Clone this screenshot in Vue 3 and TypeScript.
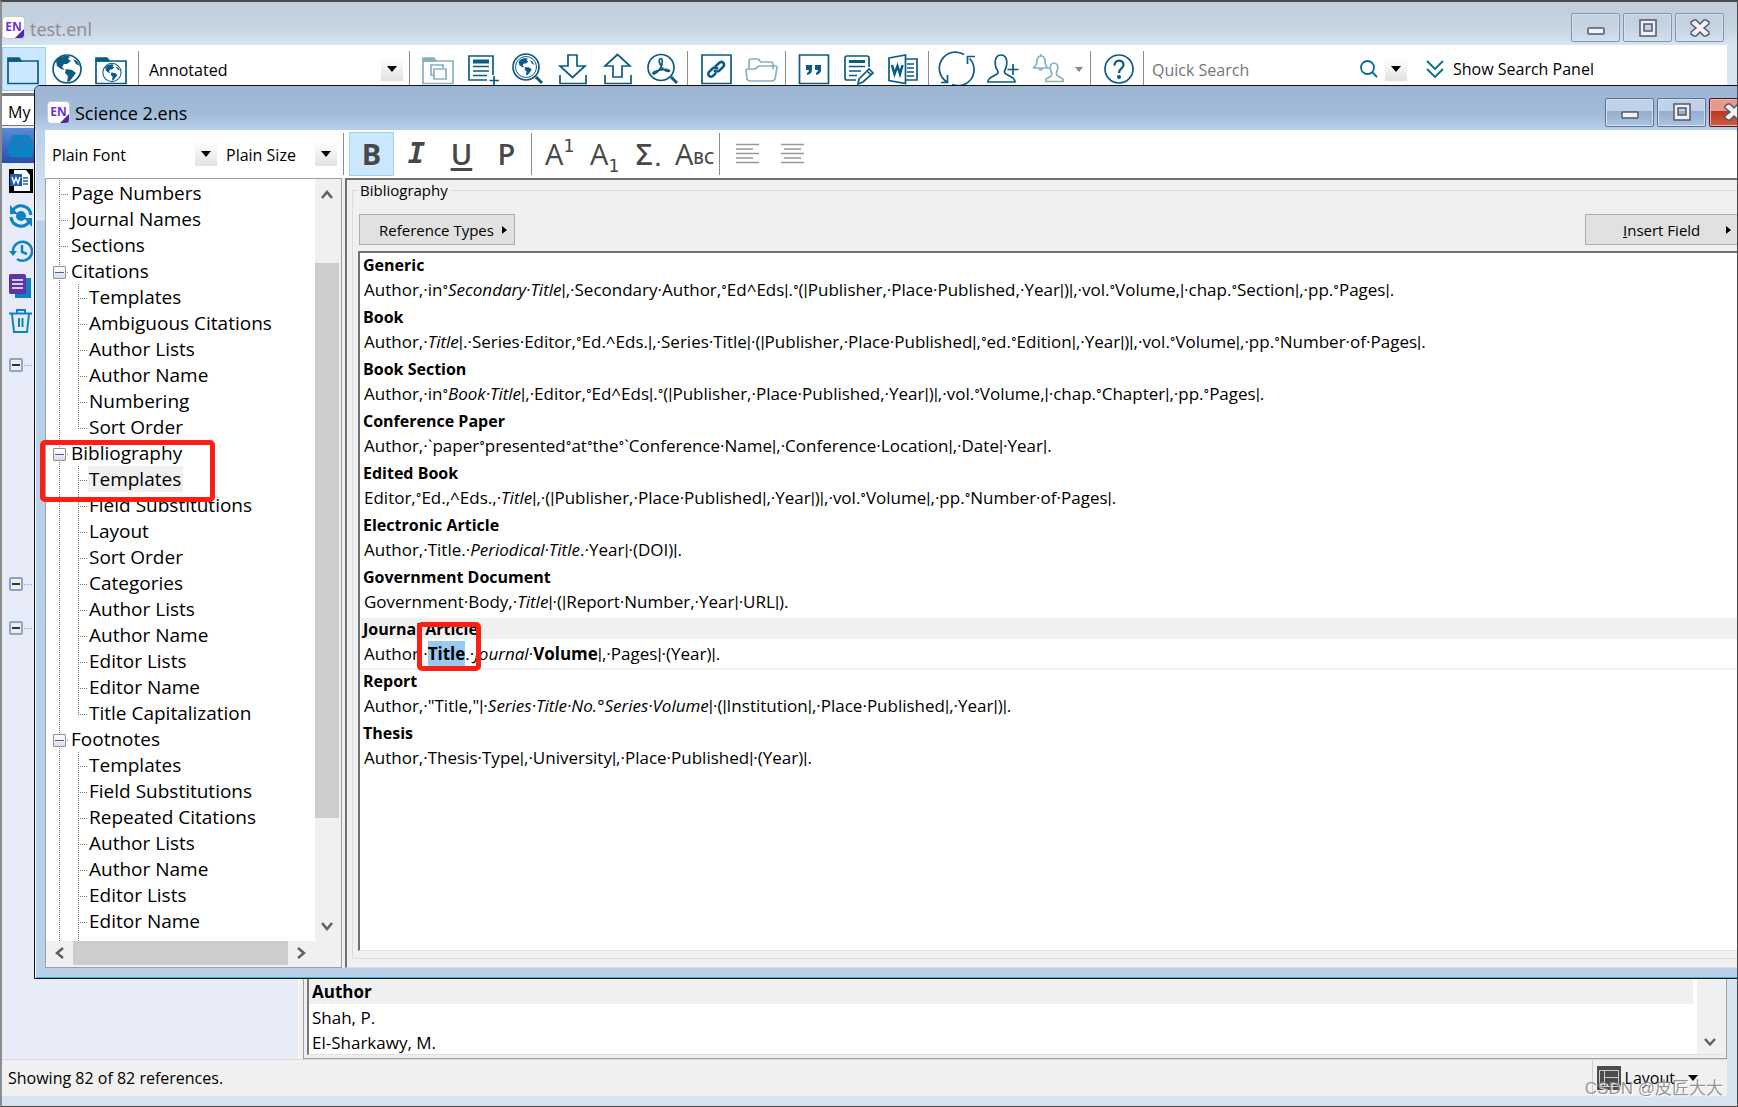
<script setup lang="ts">
import { ref } from 'vue'

interface ToolItem {
  icon?: string
  label?: string
  faded?: boolean
  active?: boolean
  caret?: boolean
  sep?: boolean
}

interface TreeRow {
  text: string
  level: 0 | 1
  group?: boolean
  last?: boolean
  selected?: boolean
}

type Part = { t: string; k: 'text' | 'italic' | 'bold' | 'bar' | 'deg' | 'selected' }

const land =
  '<path fill="currentColor" stroke="none" d="M7 10 11 6 17 4.500 21 5.500 19 8 22 10 18 13 15 13 13 16 16 19 12 18 8 15ZM24 8 28 10 31 15 27 13ZM17 18 23 19 27 22 24 26 21 30 18 31 19 25 16 22Z"/>'

const icons: Record<string, string> = {
  folder: '<path d="M3 10V32.500H33V10Z"/><path fill="currentColor" d="M3 10V7H14L16 10Z"/>',
  globe: '<circle cx="18" cy="18" r="14"/>' + land,
  folderGlobe:
    '<path d="M3 10V32.500H33V10Z"/><path fill="currentColor" d="M3 10V7H14L16 10Z"/><g transform="translate(8 10.500) scale(.61)"><circle cx="18" cy="18" r="15"/>' +
    land +
    '</g>',
  folderCopy:
    '<path d="M3 10V32.500H33V10Z"/><path fill="currentColor" d="M3 10V7H14L16 10Z"/><path d="M14 24H11V14H23V17M14 18H26V28H14Z"/>',
  newRef:
    '<path d="M28 24V5H4V29H22M8 15.500H24M8 20H24M8 24.500H22M29 25V34M24.500 29.500H34"/><path stroke-width="4" d="M8 10.500H24"/>',
  globeSearch:
    '<circle cx="16" cy="16" r="13"/><circle cx="16" cy="16" r="10.500" stroke-width="1"/><g transform="translate(4 4) scale(.66)">' +
    land +
    '</g><path stroke-width="3" d="M26 26 32 32"/>',
  download: '<path d="M13 4H22V15H30L17.500 26.500 5 15H13ZM5 24V32.500H31V24"/>',
  upload: '<path d="M13 26H22V15H30L17.500 3.500 5 15H13ZM5 24V32.500H31V24"/>',
  pdfSearch:
    '<circle cx="16" cy="16.500" r="13"/><path d="M15 8C18 6 18 13 15.500 17 13 21 8 25 8 22 9 20 17 18 22 18.500 28 20 22 22 18 18 15 14 13 9 15 8Z"/><path stroke-width="3" d="M26 26 32 32"/>',
  link: '<path d="M4 4H33V32.500H4Z"/><g stroke-width="2.500"><path d="M17 16 21 12C24 9 28 13 25 16L21 20C19 21 18 21 16 19M20 18C18 16 17 16 15 17L11 21C9 24 12 27 15 25L18 22"/></g>',
  openFolder:
    '<path d="M6 18V10Q6 8 8 8H14Q16 8 17 10L18 11H28Q30 11 30 13V18M5 18H12L16 15H33Q34 15 34 17L32 28Q31 30 29 30H7Q5 30 4 28L3 20Q3 18 5 18Z"/>',
  quote:
    '<path d="M3.500 4H32.500V32.500H3.500Z"/><path fill="currentColor" stroke="none" d="M10 14H16V19Q16 23 11 24V22Q13 21 13 19H10ZM19 14H25V19Q25 23 20 24V22Q22 21 22 19H19Z"/>',
  edit: '<path d="M28 16V7Q28 5 26 5H6Q4 5 4 7V27Q4 29 6 29H15M8 15.500H24M8 20H20M8 24.500H16M18 28 28 18 32 22 22 31 17 33ZM26 20 30 24"/><path stroke-width="3" d="M8 10.500H24"/>',
  word: '<path d="M3 7 19.500 4V32.500L3 29.500ZM20 8H31V29H20M21 13H28M21 17H28M21 21H28M21 25H28"/><path stroke-width="2.500" d="M6 14 8.500 23 11.500 15 14 23 16.500 14"/>',
  sync: '<path d="M8 31A16 16 0 0 1 25 3.500M30.500 7.500A16 16 0 0 1 13 33.500M28.500 13V5.500H36M8.500 24V31.500H2"/>',
  userPlus:
    '<path d="M12 17C10 9 12 4 17 4S24 9 22 17C20 20 20 22 22 23L29 27Q31 29 31 31H4Q4 29 6 27L13 23C15 22 14 20 12 17ZM29 13V24M23.500 18.500H34.500"/>',
  bellUser:
    '<path d="M2 17Q6 15 6 9 7 5 10 5T14 9Q14 15 17 17ZM8 18Q9.500 20 11.500 18M10 3V5M20 20C18 15 20 12 23 12S28 15 26 20C25 22 25 24 27 25L32 28V30.500H15V28L20 25C21 24 21 22 20 20Z"/>',
  help: '<circle cx="18" cy="18" r="14"/><path stroke-width="2.200" d="M13.500 14.500C13.500 8 22.500 8 22.500 14 22.500 18 18 17 18 22"/><circle cx="18" cy="26" r="1.200" fill="currentColor"/>',
}

const leftTools: ToolItem[] = [
  { icon: 'folder', label: 'Local library', active: true },
  { icon: 'globe', label: 'Online search' },
  { icon: 'folderGlobe', label: 'Integrated mode' },
]

const tools: ToolItem[] = [
  { icon: 'folderCopy', label: 'Copy to local library', faded: true },
  { icon: 'newRef', label: 'New reference' },
  { icon: 'globeSearch', label: 'Online search' },
  { icon: 'download', label: 'Import' },
  { icon: 'upload', label: 'Export' },
  { icon: 'pdfSearch', label: 'Find full text' },
  { sep: true },
  { icon: 'link', label: 'Open link' },
  { icon: 'openFolder', label: 'Open file', faded: true },
  { sep: true },
  { icon: 'quote', label: 'Insert citation' },
  { icon: 'edit', label: 'Format bibliography' },
  { icon: 'word', label: 'Return to word processor' },
  { sep: true },
  { icon: 'sync', label: 'Sync library' },
  { icon: 'userPlus', label: 'Share library' },
  { icon: 'bellUser', label: 'Activity feed', faded: true, caret: true },
  { sep: true },
  { icon: 'help', label: 'Help' },
  { sep: true },
]

const group = (text: string): TreeRow => ({ text, level: 0, group: true })
const children = (names: string[], closed = true, selected = ''): TreeRow[] =>
  names.map((text, i) => ({
    text,
    level: 1,
    last: closed && i === names.length - 1,
    selected: text === selected,
  }))

const tree: TreeRow[] = [
  { text: 'Page Numbers', level: 0 },
  { text: 'Journal Names', level: 0 },
  { text: 'Sections', level: 0 },
  group('Citations'),
  ...children(['Templates', 'Ambiguous Citations', 'Author Lists', 'Author Name', 'Numbering', 'Sort Order']),
  group('Bibliography'),
  ...children(
    [
      'Templates',
      'Field Substitutions',
      'Layout',
      'Sort Order',
      'Categories',
      'Author Lists',
      'Author Name',
      'Editor Lists',
      'Editor Name',
      'Title Capitalization',
    ],
    true,
    'Templates',
  ),
  group('Footnotes'),
  ...children(
    ['Templates', 'Field Substitutions', 'Repeated Citations', 'Author Lists', 'Author Name', 'Editor Lists', 'Editor Name'],
    false,
  ),
]

/* Template markup: _italic_, *bold*, ~selected~, | as field separator, ° as link-adjacent mark. */
const kinds: Record<string, Part['k']> = { _: 'italic', '*': 'bold', '~': 'selected' }
function parse(src: string): Part[] {
  const out: Part[] = []
  for (const piece of src.split(/(_[^_]+_|\*[^*]+\*|~[^~]+~|\||°)/)) {
    if (!piece) continue
    if (piece === '|') out.push({ t: '|', k: 'bar' })
    else if (piece === '°') out.push({ t: '°', k: 'deg' })
    else if (piece.length > 1 && kinds[piece[0]]) out.push({ t: piece.slice(1, -1), k: kinds[piece[0]] })
    else out.push({ t: piece, k: 'text' })
  }
  return out
}

const templates = [
  ['Generic', 'Author,·in°_Secondary·Title_|,·Secondary·Author,°Ed^Eds|.°(|Publisher,·Place·Published,·Year|)|,·vol.°Volume,|·chap.°Section|,·pp.°Pages|.'],
  ['Book', 'Author,·_Title_|.·Series·Editor,°Ed.^Eds.|,·Series·Title|·(|Publisher,·Place·Published|,°ed.°Edition|,·Year|)|,·vol.°Volume|,·pp.°Number·of·Pages|.'],
  ['Book Section', 'Author,·in°_Book·Title_|,·Editor,°Ed^Eds|.°(|Publisher,·Place·Published,·Year|)|,·vol.°Volume,|·chap.°Chapter|,·pp.°Pages|.'],
  ['Conference Paper', 'Author,·`paper°presented°at°the°`Conference·Name|,·Conference·Location|,·Date|·Year|.'],
  ['Edited Book', 'Editor,°Ed.,^Eds.,·_Title_|,·(|Publisher,·Place·Published|,·Year|)|,·vol.°Volume|,·pp.°Number·of·Pages|.'],
  ['Electronic Article', 'Author,·Title.·_Periodical·Title_.·Year|·(DOI)|.'],
  ['Government Document', 'Government·Body,·_Title_|·(|Report·Number,·Year|·URL|).'],
  ['Journal Article', 'Author,·~Title~.·_Journal_·*Volume*|,·Pages|·(Year)|.'],
  ['Report', 'Author,·"Title,"|·_Series·Title·No.°Series·Volume_|·(|Institution|,·Place·Published|,·Year|)|.'],
  ['Thesis', 'Author,·Thesis·Type|,·University|,·Place·Published|·(Year)|.'],
].map(([name, body]) => ({ name, parts: parse(body), current: name === 'Journal Article' }))

const search = ref('')
const authors = ['Shah, P.', 'El-Sharkawy, M.']
</script>

<template>
  <div class="app">
    <header class="titlebar">
      <span class="logo">EN</span>
      <span class="caption">test.enl</span>
      <div class="winbtns">
        <button aria-label="Minimize"><svg width="18" height="18"><rect x="1" y="9" width="16" height="6" rx="1" /></svg></button>
        <button aria-label="Maximize"><svg width="18" height="18"><path fill-rule="evenodd" d="M1 1H17V17H1ZM5 5V12H13V5Z" /></svg></button>
        <button aria-label="Close"><svg width="20" height="18"><path d="M1 3 4 1H6L10 5 14 1H16L19 3V5L14 9 19 13V15L16 17H14L10 13 6 17H4L1 15V13L6 9 1 5Z" /></svg></button>
      </div>
    </header>

    <div class="frame">
      <div class="toolbar">
        <button v-for="t in leftTools" :key="t.icon" class="tool mode" :class="{ active: t.active }" :aria-label="t.label">
          <svg class="ic" viewBox="1 0 36 36" v-html="icons[t.icon!]"></svg>
        </button>
        <span class="sep lead"></span>
        <label class="combo wide">
          <select aria-label="Output style"><option>Annotated</option></select>
          <span class="drop"><svg width="10" height="6"><path d="M0 0H10L5 6Z" /></svg></span>
        </label>
        <span class="sep"></span>
        <template v-for="(t, i) in tools" :key="i">
          <span v-if="t.sep" class="sep"></span>
          <button v-else class="tool" :class="{ faded: t.faded, withcaret: t.caret }" :aria-label="t.label">
            <svg class="ic" viewBox="1 0 36 36" v-html="icons[t.icon!]"></svg>
            <svg v-if="t.caret" class="tiny" width="8" height="5"><path d="M0 0H8L4 5Z" /></svg>
          </button>
        </template>
        <input v-model="search" class="quick" type="text" placeholder="Quick Search" aria-label="Quick Search" />
        <button class="plain" aria-label="Search">
          <svg width="18" height="18" viewBox="0 0 18 18" class="line"><circle cx="7.500" cy="7.500" r="6.500" /><path d="M12 12 17 17" /></svg>
        </button>
        <button class="plain drop" aria-label="Search options"><svg width="10" height="6"><path d="M0 0H10L5 6Z" /></svg></button>
        <button class="plain panelbtn">
          <svg width="18" height="18" viewBox="0 0 18 18" class="line"><path d="M1 1 9 9 17 1M1 9 9 17 17 9" /></svg>
          Show Search Panel
        </button>
      </div>

      <div class="main">
        <aside class="side">
          <div class="my">My</div>
          <div class="slot on">
            <svg width="24" height="24" viewBox="0 0 24 24"><path fill="#0b84c4" d="M4 1H20L24 8V20Q24 23 21 23H3Q0 23 0 20V8Z" /><path fill="none" stroke="#3c6dbd" stroke-width="2" d="M2 8H22M8 12H16" /></svg>
          </div>
          <div class="slot">
            <svg width="24" height="24" viewBox="0 0 24 24"><path fill="#000" d="M0 0H24V24H0Z" /><path fill="#fff" d="M5 1H17L21 6V22H5Z" /><path fill="#1c5bbd" d="M1 5H13V17H1Z" /><path fill="none" stroke="#fff" stroke-width="1.500" d="M3 8 5 14 7 9 9 14 11 8" /><path stroke="#1c5bbd" stroke-width="1.500" d="M14 9H19M14 12H19M14 15H19" /></svg>
          </div>
          <div class="slot">
            <svg width="24" height="24" viewBox="0 0 24 24" fill="none" stroke="#0b84c4" stroke-width="3"><path d="M4 6A10 10 0 0 1 22 11M20 18A10 10 0 0 1 2 13" /><path fill="#0b84c4" stroke="none" d="M1 1V10H9ZM23 23V14H15Z" /><circle cx="12" cy="12" r="5" fill="#0b84c4" stroke="none" /></svg>
          </div>
          <div class="slot">
            <svg width="24" height="24" viewBox="0 0 24 24" fill="none" stroke="#0b84c4" stroke-width="2.500"><path d="M4 12A9.500 9.500 0 1 1 8 20M13 6V13L18 15" /><path fill="#0b84c4" stroke="none" d="M0 12H8L4 17Z" /></svg>
          </div>
          <div class="slot">
            <svg width="24" height="24" viewBox="0 0 24 24"><path fill="#0b84c4" d="M17 4H22V24H6V20H17Z" /><path fill="#5b35a5" d="M1 0H15Q17 0 17 2V20H1Q0 20 0 18V1Z" /><path stroke="#fff" stroke-width="1.500" d="M3 6H14M3 10H14M3 14H14" /></svg>
          </div>
          <div class="slot">
            <svg width="24" height="24" viewBox="0 0 24 24" fill="none" stroke="#0b84c4" stroke-width="2"><path d="M0 4.500H23M8 4V1H16V4M3 5 5 23H18L20 5M10 9V18M13.500 9V18" /></svg>
          </div>
          <div class="branch first"><button class="node" aria-label="Collapse groups"></button></div>
          <div class="branch second"><button class="node" aria-label="Collapse online search"></button></div>
          <div class="branch third"><button class="node" aria-label="Collapse full text"></button></div>
        </aside>

        <section class="list">
          <div class="sheet">
            <table>
              <thead><tr><th scope="col">Author</th></tr></thead>
              <tbody><tr v-for="a in authors" :key="a"><td>{{ a }}</td></tr></tbody>
            </table>
            <div class="vscroll"><svg width="12" height="9" class="chev"><path d="M1 1 6 6.500 11 1" /></svg></div>
          </div>
        </section>
      </div>

      <footer class="status">
        <span>Showing 82 of 82 references.</span>
        <button class="layout">
          <svg width="24" height="24"><rect width="24" height="24" fill="#4d4d4d" /><path fill="none" stroke="#ccc" d="M2.500 4.500H21.500V20.500H2.500ZM7.500 4V20M7.500 11.500H21" /></svg>
          Layout
          <svg width="10" height="6" class="lc"><path d="M0 0H10L5 6Z" /></svg>
        </button>
      </footer>
    </div>

    <div class="dialog" role="dialog" aria-label="Science 2.ens">
      <header class="titlebar front">
        <span class="logo">EN</span>
        <span class="caption">Science 2.ens</span>
        <div class="winbtns">
          <button aria-label="Minimize"><svg width="18" height="18"><rect x="1" y="9" width="16" height="6" rx="1" /></svg></button>
          <button aria-label="Maximize"><svg width="18" height="18"><path fill-rule="evenodd" d="M1 1H17V17H1ZM5 5V12H13V5Z" /></svg></button>
          <button class="close" aria-label="Close"><svg width="20" height="18"><path d="M1 3 4 1H6L10 5 14 1H16L19 3V5L14 9 19 13V15L16 17H14L10 13 6 17H4L1 15V13L6 9 1 5Z" /></svg></button>
        </div>
      </header>

      <div class="client">
        <div class="format">
          <label class="combo font">
            <select aria-label="Font"><option>Plain Font</option></select>
            <span class="drop"><svg width="10" height="6"><path d="M0 0H10L5 6Z" /></svg></span>
          </label>
          <label class="combo size">
            <select aria-label="Size"><option>Plain Size</option></select>
            <span class="drop"><svg width="10" height="6"><path d="M0 0H10L5 6Z" /></svg></span>
          </label>
          <span class="sep"></span>
          <button class="fmt active"><b>B</b></button>
          <button class="fmt"><i>I</i></button>
          <button class="fmt"><u>U</u></button>
          <button class="fmt heavy">P</button>
          <span class="sep"></span>
          <button class="fmt">A<small class="sup">1</small></button>
          <button class="fmt">A<small class="sub">1</small></button>
          <button class="fmt heavy">Σ<small class="dot">.</small></button>
          <button class="fmt">A<small class="caps">BC</small></button>
          <span class="sep"></span>
          <button class="fmt" aria-label="Align left">
            <svg width="24" height="22" class="al"><path d="M0 1.500H23M0 6H17M0 10.500H23M0 15H17M0 19.500H23" /></svg>
          </button>
          <button class="fmt" aria-label="Center">
            <svg width="24" height="22" class="al"><path d="M0 1.500H23M3 6H20M0 10.500H23M3 15H20M0 19.500H23" /></svg>
          </button>
        </div>

        <div class="panes">
          <nav class="tree">
            <ul>
              <li v-for="(r, i) in tree" :key="i">
                <span class="g0" :class="{ tick: r.level === 0 }"><button v-if="r.group" class="toggle" aria-label="Collapse"></button></span>
                <span v-if="r.level === 1" class="g1" :class="{ last: r.last }"></span>
                <span class="name" :class="{ sel: r.selected }">{{ r.text }}</span>
              </li>
              <li class="rest"><span class="g0"></span><span class="g1"></span></li>
            </ul>
            <div class="vs">
              <svg width="12" height="9" class="chev"><path d="M1 8 6 2 11 8" /></svg>
              <i class="thumb"></i>
              <svg width="12" height="9" class="chev"><path d="M1 1 6 7 11 1" /></svg>
            </div>
            <div class="hs">
              <svg width="9" height="12" class="chev"><path d="M8 1 2 6 8 11" /></svg>
              <i class="thumb"></i>
              <svg width="9" height="12" class="chev"><path d="M1 1 7 6 1 11" /></svg>
            </div>
          </nav>

          <section class="pane">
            <fieldset>
              <legend>Bibliography</legend>
              <div class="actions">
                <button class="push">Reference Types<svg width="5" height="8"><path d="M0 0V8L5 4Z" /></svg></button>
                <button class="push insert"><span><u>I</u>nsert Field</span><svg width="5" height="8"><path d="M0 0V8L5 4Z" /></svg></button>
              </div>
              <div class="editor">
                <article v-for="t in templates" :key="t.name" :class="{ current: t.current }">
                  <h3>{{ t.name }}</h3>
                  <p><span v-for="(p, i) in t.parts" :key="i" :class="p.k">{{ p.t }}</span></p>
                </article>
              </div>
            </fieldset>
          </section>
        </div>
      </div>
    </div>

    <div class="mark tree-mark"></div>
    <div class="mark title-mark"></div>
    <div class="watermark">CSDN @皮匠大大</div>
  </div>
</template>

<style>
body {
  margin: 0;
}
</style>

<style scoped>
.app {
  position: relative;
  box-sizing: border-box;
  display: flex;
  flex-direction: column;
  min-height: 100vh;
  overflow: hidden;
  border: 1px solid #4a4a4a;
  border-top-width: 2px;
  border-left: 2px solid #8c8c8c;
  background: #d7e4f2;
  color: #000;
  font: 16px/24px "Open Sans", "Noto Sans", sans-serif;
}
.app * {
  box-sizing: border-box;
}
button,
select,
input {
  margin: 0;
  padding: 0;
  border: 0;
  border-radius: 0;
  background: none;
  color: inherit;
  font: inherit;
}
.titlebar {
  display: flex;
  align-items: center;
  height: 43px;
  padding: 8px 13px 0 0;
  background: linear-gradient(#c0cddb, #c6d4e2 60%, #d7e4f2);
  color: #8c8c8c;
  font-size: 18px;
}
.titlebar.front {
  height: 44px;
  padding: 8px 12px 0 12px;
  background: linear-gradient(#9cb6d4, #a0bad8 60%, #b9d0ea);
  color: #000;
}
.logo {
  width: 23px;
  height: 23px;
  border: 1px solid #c9c9d6;
  border-radius: 4px;
  background: linear-gradient(135deg, #fff 78%, #4b2aa8 79%);
  color: #6a35e0;
  font-size: 12px;
  font-weight: 700;
  line-height: 20px;
  text-align: center;
}
.caption {
  margin-left: 5px;
  padding-top: 2px;
}
.winbtns {
  display: flex;
  gap: 3px;
  margin-left: auto;
}
.winbtns button {
  display: flex;
  align-items: center;
  justify-content: center;
  width: 49px;
  height: 29px;
  border: 1px solid #8593b0;
  border-radius: 2px;
  box-shadow: inset 0 0 0 1px #d5e0ec;
}
.winbtns svg {
  fill: #f2f2f2;
  stroke: #50586c;
  stroke-width: 1.5;
}
.front .winbtns button {
  border-color: #5f7396;
  background: linear-gradient(#bfd2ea 44%, #94aecb 45%, #a9c3e0);
}
.front .winbtns .close {
  border-color: #501220;
  background: linear-gradient(#e59a8e 44%, #b83a22 45%, #cf5c42);
  box-shadow: inset 0 0 0 1px #f0b5aa;
}
.frame {
  display: flex;
  flex: 1;
  flex-direction: column;
  margin: 0 10px 10px 0;
}
.toolbar {
  display: flex;
  align-items: center;
  height: 48px;
  background: #fff;
}
.tool {
  display: flex;
  flex: none;
  align-items: center;
  justify-content: center;
  width: 45px;
  height: 44px;
  color: #0a5c86;
}
.tool.mode {
  width: 44px;
}
.tool.faded {
  color: #86b0c6;
}
.tool.withcaret {
  width: 64px;
  gap: 7px;
}
.tool.active,
.fmt.active {
  border: 1px solid #99d1ff;
  background: #cce8ff;
}
.ic {
  flex: none;
  width: 36px;
  height: 36px;
  overflow: visible;
  fill: none;
  stroke: currentColor;
  stroke-width: 1.7;
}
.tiny {
  fill: #888;
}
.line {
  fill: none;
  stroke: #0a6a96;
  stroke-width: 1.8;
}
.sep {
  flex: none;
  width: 1px;
  height: 42px;
  margin: 0 6px 0 1px;
  background: #8c8c8c;
}
.toolbar .sep {
  align-self: flex-end;
}
.sep.lead {
  margin: 0 10px 0 4px;
}
.combo {
  display: flex;
  flex: none;
  align-items: center;
}
.combo select {
  flex: 1;
  min-width: 0;
  height: 26px;
  padding-top: 2px;
  appearance: none;
  outline: none;
}
.combo.wide {
  width: 259px;
  padding-right: 5px;
}
.drop {
  display: flex;
  flex: none;
  align-items: center;
  justify-content: center;
  width: 22px;
  height: 24px;
  background: linear-gradient(#fff, #e2e2e2);
}
.quick {
  width: 208px;
  margin-left: 2px;
  padding-top: 2px;
  outline: none;
}
.quick::placeholder {
  color: #757575;
  opacity: 1;
}
.plain {
  display: flex;
  align-items: center;
}
.plain.drop {
  margin-left: 7px;
}
.panelbtn {
  gap: 9px;
  margin-left: 19px;
  white-space: nowrap;
}
.main {
  display: flex;
  flex: 1;
  border-top: 3px solid #777;
  background: #f0f0f0;
}
.side {
  width: 297px;
  border-right: 1px solid #fff;
  background: #e8ecf9;
}
.my {
  height: 30px;
  margin-bottom: 2px;
  padding: 4px 6px;
  border-bottom: 1px solid #777;
  background: #fff;
}
.slot {
  display: flex;
  align-items: center;
  height: 35px;
  padding-left: 7px;
}
.slot.on {
  background: linear-gradient(#5b8ad4, #2350b0);
}
.branch {
  display: flex;
  width: 31px;
  padding-left: 7px;
  background: repeating-linear-gradient(90deg, #a9b8d0 0 2px, transparent 2px 3px) 22px 7px / 9px 1px no-repeat;
}
.node {
  width: 14px;
  height: 14px;
  border: 2px solid #8da6c4;
  border-radius: 2px;
  background: linear-gradient(#333, #333) center / 8px 2px no-repeat #eee;
}
.first {
  margin-top: 20px;
}
.second {
  margin-top: 205px;
}
.third {
  margin-top: 30px;
}
.list {
  display: flex;
  flex: 1;
  flex-direction: column;
  justify-content: flex-end;
  margin-left: 4px;
  padding: 3px;
  border: 1px solid #a0a0a0;
}
.sheet {
  display: flex;
  border-left: 2px solid #777;
  border-bottom: 1px solid #e0e0e0;
}
.sheet table {
  flex: 1;
  border-collapse: collapse;
  border-right: 4px solid #fff;
}
.sheet th {
  height: 25px;
  padding: 0 3px;
  font-size: 17px;
  line-height: 25px;
  text-align: left;
}
.sheet td {
  height: 25px;
  padding: 2px 3px 0;
  background: #fff;
  font-size: 17px;
  line-height: 23px;
}
.vscroll {
  display: flex;
  align-items: flex-end;
  justify-content: center;
  width: 26px;
  padding-bottom: 7px;
}
.chev {
  flex: none;
  fill: none;
  stroke: #606060;
  stroke-width: 2.5;
}
.status {
  display: flex;
  align-items: center;
  justify-content: space-between;
  height: 37px;
  padding: 0 29px 0 6px;
  border-top: 1px solid #dadada;
  background: #f0f0f0;
}
.layout {
  display: flex;
  align-items: center;
  gap: 4px;
  height: 36px;
  padding-left: 4px;
  border-left: 1px solid #ccc;
}
.lc {
  margin-left: 9px;
}
.dialog {
  position: absolute;
  top: 83px;
  right: -34px;
  left: 32px;
  border: 1px solid #111;
  border-radius: 6px 6px 0 0;
  background: #b9d0ea;
  box-shadow: inset 1px 1px 0 #e6eff9, inset 0 -1px 0 #35b8cc;
  overflow: hidden;
}
.client {
  padding: 0 9px 10px 10px;
  background: linear-gradient(#b9d0ea, #dbe7f4 90px, #b9d0ea 91px);
  box-shadow: inset 1px 0 0 #fff, inset 0 -1px 0 #35b8cc;
}
.format {
  display: flex;
  align-items: center;
  height: 48px;
  background: #fff;
}
.format .sep {
  margin: 0 5px 0 2px;
}
.format .combo select {
  padding-left: 7px;
}
.combo.font {
  width: 172px;
}
.combo.size {
  width: 124px;
  padding-right: 4px;
}
.combo.size select {
  margin-left: 2px;
}
.fmt {
  display: flex;
  flex: none;
  align-items: center;
  justify-content: center;
  width: 45px;
  height: 44px;
  color: #484848;
  font-size: 29px;
  line-height: 40px;
}
.fmt.heavy,
.fmt u {
  font-weight: 600;
}
.fmt i {
  padding-bottom: 2px;
  font-family: "DejaVu Sans Mono", monospace;
  font-weight: 700;
}
.fmt u {
  text-underline-offset: 3px;
  text-decoration-thickness: 3px;
}
.fmt small {
  font-family: "DejaVu Sans Mono", monospace;
  font-size: 18px;
  line-height: 18px;
}
.fmt .sup {
  align-self: flex-start;
  padding-top: 5px;
}
.fmt .sub {
  align-self: flex-end;
  padding-bottom: 1px;
}
.fmt .dot {
  padding-top: 12px;
}
.fmt .caps {
  padding-top: 8px;
  font: 600 16px/18px "Open Sans", sans-serif;
}
.al {
  fill: none;
  stroke: #999;
  stroke-width: 1.5;
}
.panes {
  display: flex;
  gap: 3px;
  background: #f0f0f0;
}
.tree {
  display: grid;
  flex: none;
  grid-template: 762px 26px / 269px 26px;
  border: 1px solid #a0a0a0;
  background: #f0f0f0;
}
.tree ul {
  margin: 0;
  padding: 1px 0 0 13px;
  overflow: hidden;
  background: #fff;
  list-style: none;
}
.tree li {
  display: flex;
  height: 26px;
  font-size: 19px;
  line-height: 27px;
  white-space: nowrap;
}
.tree .rest {
  height: 7px;
}
.rest .g0,
.rest .g1 {
  height: 7px;
  background: var(--v) 0 0 / 1px 100% no-repeat;
}
.g0,
.g1 {
  --v: repeating-linear-gradient(#777 0 1px, transparent 1px 2px);
  --h: repeating-linear-gradient(90deg, #777 0 1px, transparent 1px 2px);
  flex: none;
  height: 26px;
  background: var(--v) 0 0 / 1px 100% no-repeat;
}
.g0 {
  width: 19px;
}
.g0.tick {
  width: 11px;
  background: var(--v) 0 0 / 1px 100% no-repeat, var(--h) 0 14px / 9px 1px no-repeat;
}
.g1 {
  width: 10px;
  background: var(--v) 0 0 / 1px 100% no-repeat, var(--h) 0 14px / 9px 1px no-repeat;
}
.g1.last {
  background: var(--v) 0 0 / 1px 15px no-repeat, var(--h) 0 14px / 9px 1px no-repeat;
}
.toggle {
  display: block;
  width: 13px;
  height: 13px;
  margin: 8px 0 0 -6px;
  border: 1px solid #919191;
  border-radius: 1px;
  background: linear-gradient(#4060b0, #4060b0) center / 9px 1px no-repeat, linear-gradient(#fff, #dcdcdc);
}
.name {
  height: 26px;
  padding: 0 2px 0 1px;
}
.name.sel {
  background: #f0f0f0;
}
.vs {
  display: flex;
  flex-direction: column;
  align-items: center;
  padding: 11px 2px 10px 0;
}
.vs .thumb {
  width: 100%;
  height: 555px;
  margin: 64px 0 auto;
  background: #cdcdcd;
}
.hs {
  display: flex;
  align-items: center;
  gap: 9px;
  height: 24px;
  padding: 0 9px;
}
.hs .thumb {
  flex: 1;
  height: 24px;
  background: #cdcdcd;
}
.pane {
  display: flex;
  flex: 1;
  flex-direction: column;
  border: solid #a0a0a0;
  border-width: 2px 0 1px 2px;
  border-color: #707070 #fff #dcdcdc #707070;
}
fieldset {
  display: flex;
  flex: 1;
  flex-direction: column;
  min-width: 0;
  margin: 0 5px 8px;
  padding: 14px 4px 7px 5px;
  border: 1px solid #dcdcdc;
}
legend {
  padding: 0 2px;
  font-size: 15px;
  line-height: 20px;
}
.actions {
  display: flex;
  justify-content: space-between;
  margin: 0 0 6px 1px;
}
.push {
  display: flex;
  align-items: center;
  gap: 8px;
  width: 156px;
  height: 31px;
  padding-left: 19px;
  border: 1px solid #adadad;
  background: #e1e1e1;
  font-size: 15px;
  white-space: nowrap;
}
.push.insert {
  gap: 26px;
  width: 166px;
  padding-left: 37px;
}
.editor {
  flex: 1;
  padding: 1px 0 0 1px;
  border: solid #707070;
  border-width: 2px 0 1px 2px;
  border-bottom-color: #e3e3e3;
  background: #fff;
}
h3 {
  height: 21px;
  margin: 0;
  padding-left: 2px;
  font-size: 16px;
  font-weight: 700;
  line-height: 22px;
}
p {
  height: 31px;
  margin: 0;
  padding: 2px 0 0 3px;
  border-bottom: 2px solid transparent;
  font-size: 17px;
  line-height: 25px;
  white-space: nowrap;
}
.current h3 {
  background: #f0f0f0;
}
.current p {
  border-color: #f0f0f0;
}
.italic {
  font-style: italic;
}
.bold,
.selected {
  font-weight: 700;
}
.selected {
  display: inline-block;
  height: 25px;
  background: #99c9ef;
  vertical-align: top;
}
.bar {
  font-family: Roboto, sans-serif;
}
.deg {
  font-family: Roboto, sans-serif;
  font-size: 15px;
}
.mark {
  position: absolute;
  border: 5px solid #ff1e12;
  border-radius: 5px;
}
.tree-mark {
  top: 438px;
  left: 38px;
  width: 175px;
  height: 62px;
}
.title-mark {
  top: 620px;
  left: 415px;
  width: 64px;
  height: 49px;
}
.watermark {
  position: absolute;
  right: 14px;
  bottom: 5px;
  color: rgba(130, 130, 130, 0.85);
  font: 17px/24px "Liberation Sans", "Noto Sans CJK SC", sans-serif;
  text-shadow: 1px 1px 0 #fff;
}
</style>
